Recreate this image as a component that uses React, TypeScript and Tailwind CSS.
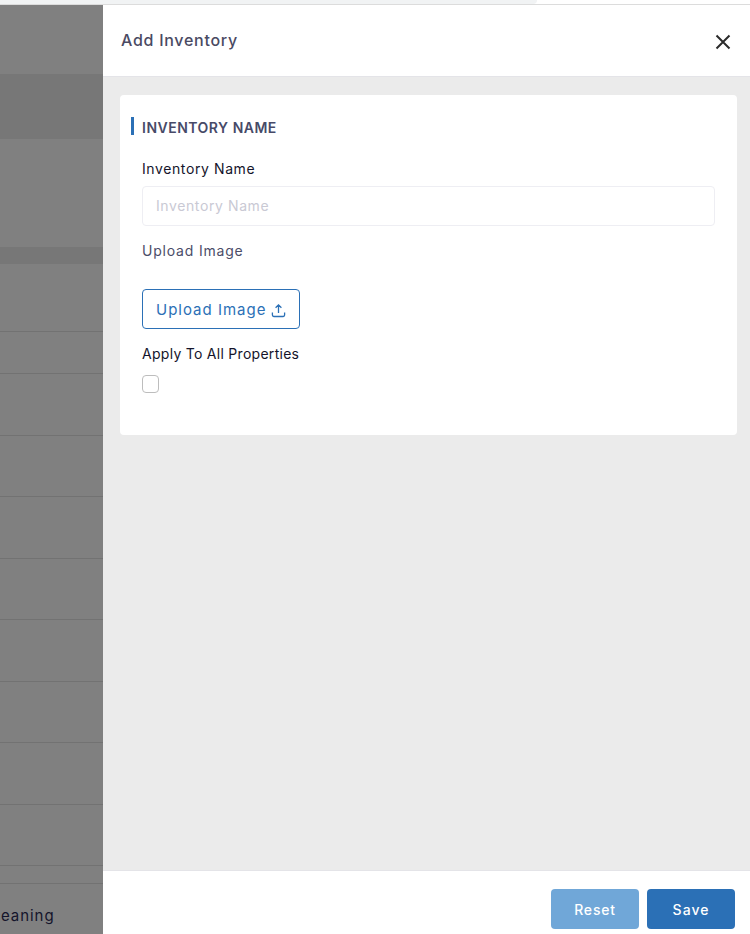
import React from "react";

const backdropRows = ["h-[68px]", "h-[42px]", "h-[62px]", "h-[61px]", "h-[62px]", "h-[61px]", "h-[62px]", "h-[61px]", "h-[62px]", "h-[61px]", "h-[18px]"];

const fontClass = "font-['Inter','Noto_Sans',sans-serif]";

const App: React.FC = () => {
  return (
    <div className={`w-[750px] h-[934px] overflow-hidden flex flex-col bg-white ${fontClass}`}>
      <div className="h-[5px] shrink-0 flex border-b border-[#dcdcdc] bg-white">
        <div className="w-[537px] bg-[#f1f3f4] rounded-br-[10px]"></div>
      </div>

      <div className="flex-1 flex min-h-0">
        {/* dimmed page behind the drawer */}
        <div className="w-[103px] shrink-0 flex flex-col bg-[#808080] overflow-hidden">
          <div className="h-[69px] shrink-0"></div>
          <div className="h-[65px] shrink-0 bg-[#777777]"></div>
          <div className="h-[108px] shrink-0"></div>
          <div className="h-[17px] shrink-0 bg-[#777777]"></div>
          {backdropRows.map((h, i) => (
            <div key={i} className={`${h} shrink-0 border-b border-[#727272]`}></div>
          ))}
          <div className="pt-[21px] pl-[1px] text-[15px] leading-[21px] text-[#14142b] tracking-[0.95px] whitespace-nowrap">
            eaning
          </div>
        </div>

        {/* drawer */}
        <div className="flex-1 flex flex-col min-w-0 bg-white rounded-tl-[4px]">
          <div className="h-[72px] shrink-0 flex items-center justify-between pl-[18px] pr-[18px] border-b border-[#e4e4e8]">
            <h2 className="text-[16px] font-medium tracking-[0.72px] text-[#4a4a63] -mt-[2px]">Add Inventory</h2>
            <svg className="mt-[2px]" width="18" height="18" viewBox="0 0 18 18" fill="none" stroke="#2b2b2b" strokeWidth="2" aria-label="Close">
              <path d="M2.5 2.5 15.5 15.5M15.5 2.5 2.5 15.5" />
            </svg>
          </div>

          <div className="flex-1 bg-[#ebebeb] pt-[18px] pl-[17px] pr-[13px]">
            <div className="h-[340px] bg-white rounded-[4px] pt-[22px] pl-[11px] pr-[22px]">
              <div className="flex items-center h-[18px] border-l-[3px] border-[#2b70b6] pl-[8px]">
                <span className="text-[14px] font-semibold tracking-[0.5px] text-[#474a68] mt-[2px]">INVENTORY NAME</span>
              </div>
              <div className="pl-[11px]">
                <label className="block mt-[23px] text-[14px] leading-[21px] tracking-[0.6px] text-[#14142b]">Inventory Name</label>
                <input
                  readOnly
                  placeholder="Inventory Name"
                  className="block mt-[7px] w-full h-[40px] px-[13px] pb-[2px] text-[14px] tracking-[0.6px] border border-[#eeeef3] rounded-[4px] outline-none placeholder:text-[#c9c9d4]"
                />
                <label className="block mt-[14px] text-[14px] leading-[21px] tracking-[0.8px] text-[#4b4d68]">Upload Image</label>
                <button className="mt-[28px] flex items-center gap-[5px] h-[40px] w-[158px] pl-[13px] pt-[2px] border border-[#2b70b6] rounded-[4px] text-[15px] tracking-[1px] text-[#2b70b6]">
                  Upload Image
                  <svg width="15" height="15" viewBox="0 0 15 15" fill="none" stroke="#2b70b6" strokeWidth="1.3">
                    <path d="M7.5 10V2.2M4.6 4.8 7.5 1.9l2.9 2.9M1.4 9.5v2.6c0 .8.6 1.4 1.4 1.4h9.4c.8 0 1.4-.6 1.4-1.4V9.5" />
                  </svg>
                </button>
                <label className="block mt-[14px] text-[14px] leading-[21px] tracking-[0.28px] text-[#14142b]">Apply To All Properties</label>
                <div className="mt-[11px] w-[17px] h-[18px] border border-[#bdbdbd] rounded-[4px] bg-white"></div>
              </div>
            </div>
          </div>

          <div className="h-[64px] shrink-0 border-t border-[#e4e4e8] flex justify-end gap-[8px] pt-[18px] pr-[15px]">
            <button className="w-[88px] h-[40px] rounded-[4px] bg-[#70a7d8] text-white text-[14px] font-medium tracking-[0.8px]">Reset</button>
            <button className="w-[88px] h-[40px] rounded-[4px] bg-[#2b70b6] text-white text-[14px] font-medium tracking-[1px]">Save</button>
          </div>
        </div>
      </div>
    </div>
  );
};

export default App;
